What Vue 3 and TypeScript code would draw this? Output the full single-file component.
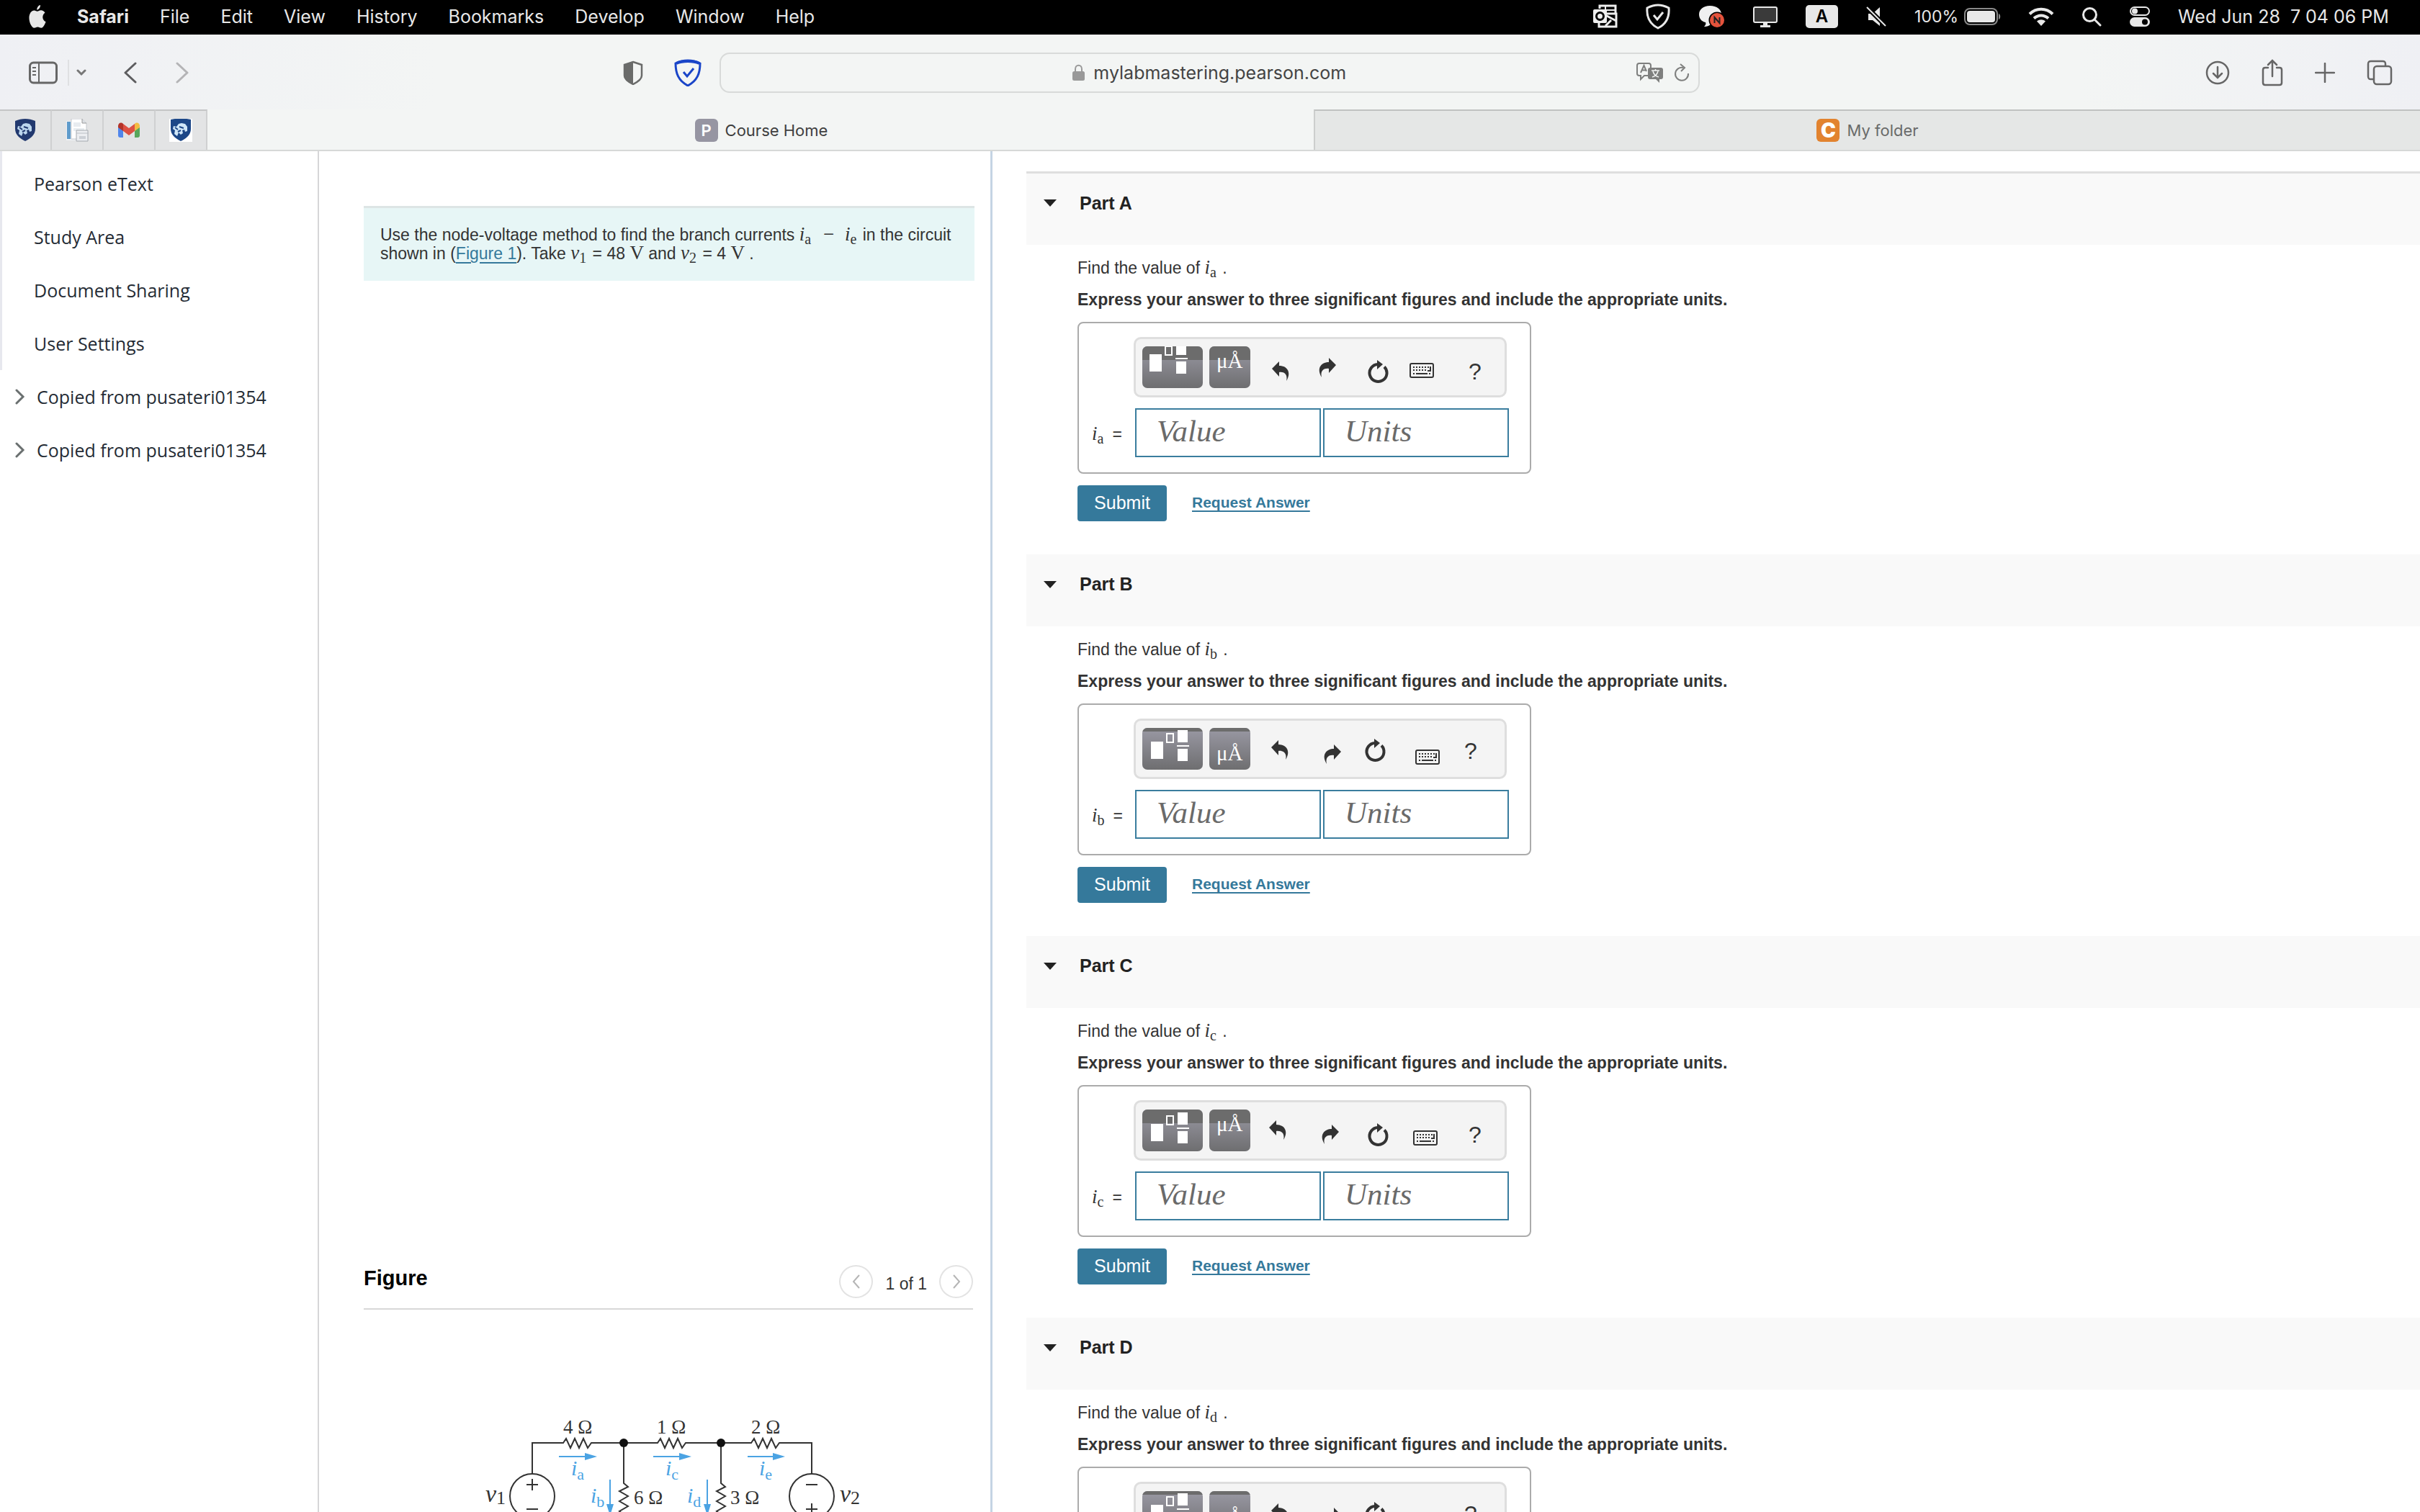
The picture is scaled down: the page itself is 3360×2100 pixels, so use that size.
<script setup lang="ts">
type Point = [number, number]

interface Part {
  id: string
  sub: string
  template: Point
  units: Point
  shade: number
  undo: Point
  redo: Point
  reset: Point
  keys: Point
  help: Point
}

const menus: string[] = ['File', 'Edit', 'View', 'History', 'Bookmarks', 'Develop', 'Window', 'Help']

const links: string[] = ['Pearson eText', 'Study Area', 'Document Sharing', 'User Settings']
const copies: string[] = ['Copied from pusateri01354', 'Copied from pusateri01354']

const parts: Part[] = [
  { id: 'A', sub: 'a', template: [-2, -8], units: [0, -15], shade: 19, undo: [21, 34], redo: [20, 29], reset: [22, 32], keys: [14, 36], help: [31, 35] },
  { id: 'B', sub: 'b', template: [0, 0], units: [0, 0], shade: 5, undo: [20, 30], redo: [27, 36], reset: [18, 28], keys: [22, 43], help: [25, 32] },
  { id: 'C', sub: 'c', template: [0, 1], units: [0, -15], shade: 19, undo: [17, 28], redo: [24, 34], reset: [22, 32], keys: [19, 42], help: [31, 35] },
  { id: 'D', sub: 'd', template: [0, 0], units: [0, 0], shade: 5, undo: [20, 30], redo: [27, 36], reset: [18, 28], keys: [22, 43], help: [25, 32] },
]

const at = (p: Point): string => `translate(${p[0]} ${p[1]})`
</script>

<template>
  <div class="screen">
    <header class="menubar">
      <nav class="menus">
        <svg class="apple" width="24" height="34" viewBox="0 0 27 34" preserveAspectRatio="none"><path fill="#e8e8e8" d="M18 1c.3 3-2.300 6.500-5.300 6.700C12.300 4.700 15 1.500 18 1zM13.300 9.700c1.600 0 3-1.500 5.700-1.500 2.500 0 5 1.300 6.300 3.500-5.300 3.200-4.500 10.300 1.200 12.600-1.200 3.300-4.200 8.500-7 8.500-2.200 0-3-1.300-5.600-1.300s-3.500 1.300-5.500 1.300C4.700 32.800.5 25.500.5 18.800c0-6.200 3.700-10.400 7.900-10.400 2.200 0 3.600 1.300 4.900 1.300z" /></svg>
        <b>Safari</b>
        <span v-for="m in menus" :key="m">{{ m }}</span>
      </nav>
      <div class="status">
        <svg width="34" height="34" viewBox="0 0 34 34"><path d="M9 6V2h22v11" fill="none" stroke="#eee" stroke-width="3" /><path d="M17 2v12M17 8h14" stroke="#eee" stroke-width="2" /><path d="M8 13h24v18H8z" fill="none" stroke="#eee" stroke-width="3" /><path d="M17 15l15 8M17 30l8-8" stroke="#eee" stroke-width="3" /><rect x="0" y="7" width="19" height="19" rx="2" fill="#eee" /><circle cx="9.500" cy="16.500" r="5" fill="none" stroke="#000" stroke-width="3" /></svg>
        <svg width="36" height="36" viewBox="0 0 36 36"><path d="M18 2c5 0 10 1.500 15 4 1 12-3 22-15 28C6 28 2 18 3 6c5-2.500 10-4 15-4z" fill="none" stroke="#e8e8e8" stroke-width="3" /><path d="M12 16l5 6 8-10" fill="none" stroke="#e8e8e8" stroke-width="3" /></svg>
        <svg width="37" height="34" viewBox="0 0 37 34"><path d="M16 2c10 0 16 5 16 12s-6 12-13 12c-3 4-7 5-11 5 2-2 3-4 2-6C4 24 1 19 1 14 1 7 7 2 16 2z" fill="#f0f0f0" /><circle cx="26" cy="22" r="11.500" fill="#000" /><circle cx="26" cy="22" r="10" fill="#e5533c" /><path d="M22.500 26v-8l7 8v-8" fill="none" stroke="#222" stroke-width="2" /></svg>
        <svg width="36" height="32" viewBox="0 0 36 32"><rect x="2" y="3" width="32" height="21" rx="2" fill="#3a3a3a" stroke="#e8e8e8" stroke-width="2" /><path d="M15 24h6v4h4v3H11v-3h4z" fill="#e8e8e8" /></svg>
        <span class="input-source">A</span>
        <svg width="30" height="30" viewBox="0 0 30 30"><path d="M4 11h6L20 2v26l-10-8H4z" fill="#e8e8e8" /><path d="M2 2l26 26" stroke="#000" stroke-width="6" /><path d="M2 2l26 26" stroke="#e8e8e8" stroke-width="2" /></svg>
        <span class="battery">100%
          <svg width="51" height="26" viewBox="0 0 51 26"><rect x="1" y="2" width="45" height="22" rx="7" fill="none" stroke="#8a8a8a" stroke-width="2" /><rect x="4" y="5" width="39" height="16" rx="4" fill="#e8e8e8" /><path d="M48 9c3 1 3 7 0 8z" fill="#8a8a8a" /></svg>
        </span>
        <svg width="36" height="27" viewBox="0 0 36 27"><g fill="none" stroke="#e8e8e8" stroke-width="4"><path d="M2 9.500c9-9 23-9 32 0" /><path d="M8 15.500c6-5.500 14-5.500 20 0" /></g><path d="M18 26l-6-6.500c4-3 8-3 12 0z" fill="#e8e8e8" /></svg>
        <svg width="28" height="28" viewBox="0 0 28 28"><circle cx="11.500" cy="11.500" r="9" fill="none" stroke="#e8e8e8" stroke-width="3" /><path d="M18 18l8 8" stroke="#e8e8e8" stroke-width="3" stroke-linecap="round" /></svg>
        <svg width="30" height="28" viewBox="0 0 30 28"><rect x="2" y="1" width="26" height="11" rx="5.500" fill="none" stroke="#e8e8e8" stroke-width="2" /><circle cx="8" cy="6.500" r="4" fill="#e8e8e8" /><rect x="1" y="15" width="28" height="13" rx="6.500" fill="#e8e8e8" /><circle cx="22" cy="21.500" r="4" fill="#000" /></svg>
        <span class="clock">Wed Jun 28&nbsp; 7 04 06 PM</span>
      </div>
    </header>

    <div class="toolbar">
      <div class="tool-left">
        <button class="icon" aria-label="Show sidebar"><svg width="40" height="32" viewBox="0 0 40 32"><rect x="1.500" y="2" width="37" height="28" rx="5" fill="none" stroke="#666" stroke-width="3" /><path d="M14 2v28M5 9h5M5 14h5M5 19h5" stroke="#666" stroke-width="2" /></svg></button>
        <i class="rule"></i>
        <button class="icon" aria-label="Tab groups"><svg width="14" height="10" viewBox="0 0 14 10"><path d="M2 2l5 5 5-5" fill="none" stroke="#777" stroke-width="3" stroke-linecap="round" /></svg></button>
        <button class="icon back" aria-label="Back"><svg width="18" height="30" viewBox="0 0 18 30"><path d="M16 2L2 15l14 13" fill="none" stroke="#5d5d5f" stroke-width="3" stroke-linecap="round" stroke-linejoin="round" /></svg></button>
        <button class="icon forward" aria-label="Forward"><svg width="18" height="30" viewBox="0 0 18 30"><path d="M2 2l14 13L2 28" fill="none" stroke="#b4b4b6" stroke-width="3" stroke-linecap="round" stroke-linejoin="round" /></svg></button>
      </div>
      <div class="shields">
        <button class="icon" aria-label="Privacy report"><svg width="28" height="34" viewBox="0 0 28 34"><path d="M14 2l12 4v15c0 5-6 9-12 12C8 30 2 26 2 21V6z" fill="none" stroke="#6a6b6a" stroke-width="2.500" /><path d="M14 1v32C7 30 1 26 1 21V6z" fill="#6a6b6a" /></svg></button>
        <button class="icon" aria-label="Ad blocker"><svg width="38" height="38" viewBox="0 0 38 38"><path d="M19 2c6 0 11 1 17 4 0 14-4 24-17 31C6 30 2 20 2 6c6-3 11-4 17-4z" fill="none" stroke="#1a45c8" stroke-width="3" /><path d="M3 6c9-4 23-4 32 0" fill="none" stroke="#1a45c8" stroke-width="4" /><path d="M13 18l5 6 9-11" fill="none" stroke="#1a45c8" stroke-width="3" /></svg></button>
      </div>
      <div class="address">
        <span class="url">
          <svg width="17" height="24" viewBox="0 0 17 24"><path d="M4 11V7c0-7 9-7 9 0v4" fill="none" stroke="#999" stroke-width="2" /><rect x="0" y="10" width="17" height="13" rx="2.500" fill="#999" /></svg>
          mylabmastering.pearson.com
        </span>
        <span class="url-tools">
          <svg width="38" height="28" viewBox="0 0 38 28"><path d="M16 18h-5l-5 5v-5H4c-2 0-3-1-3-3V4c0-2 1-3 3-3h13c2 0 3 1 3 3v3" fill="none" stroke="#7e7f7e" stroke-width="2" /><path d="M6 14L10.500 4 14 12M7.500 10.500h6" fill="none" stroke="#7e7f7e" stroke-width="2" /><path d="M19 7h15c2 0 3 1 3 3v10c0 2-1 3-3 3h-2v5l-5-5h-8c-2 0-3-1-3-3V10c0-2 1-3 3-3z" fill="#7e7f7e" /><path d="M21 11h11M26.500 9v2M30 12c-1 4-4 7-8 8M23 12c1 4 4 7 8 8" fill="none" stroke="#f3f5f4" stroke-width="1.500" /></svg>
          <svg width="22" height="26" viewBox="0 0 22 26"><path d="M13 6A9 9 0 1 0 20 14" fill="none" stroke="#7e7f7e" stroke-width="2" /><path d="M9 1l6 5-5 5" fill="none" stroke="#7e7f7e" stroke-width="2" /></svg>
        </span>
      </div>
      <div class="tool-right">
        <button class="icon" aria-label="Downloads"><svg width="34" height="34" viewBox="0 0 34 34"><circle cx="17" cy="17" r="15" fill="none" stroke="#666" stroke-width="2.500" /><path d="M17 9v15M11 18l6 6 6-6" fill="none" stroke="#666" stroke-width="2.500" stroke-linecap="round" /></svg></button>
        <button class="icon" aria-label="Share"><svg width="30" height="38" viewBox="0 0 30 38"><path d="M9 12H5c-2 0-3 1-3 3v18c0 2 1 3 3 3h20c2 0 3-1 3-3V15c0-2-1-3-3-3h-4M15 24V3M9 8l6-6 6 6" fill="none" stroke="#666" stroke-width="2.500" stroke-linecap="round" /></svg></button>
        <button class="icon" aria-label="New tab"><svg width="28" height="28" viewBox="0 0 28 28"><path d="M14 1v26M1 14h26" stroke="#666" stroke-width="2.500" stroke-linecap="round" /></svg></button>
        <button class="icon" aria-label="Tab overview"><svg width="36" height="36" viewBox="0 0 36 36"><path d="M9 27H6c-3 0-4-1-4-4V6c0-3 1-4 4-4h16c3 0 4 1 4 4v3" fill="none" stroke="#666" stroke-width="2.500" /><rect x="10" y="9" width="24" height="25" rx="4" fill="none" stroke="#666" stroke-width="2.500" /></svg></button>
      </div>
    </div>

    <div class="tabs">
      <div class="pin"><svg width="32" height="32" viewBox="0 0 32 32"><path d="M2 3c9-4 19-4 28 0v11c0 8-6 13-14 17C8 27 2 22 2 14z" fill="#22396f" /><path d="M6 10l4 1 3-4 4-1 5 1 3 4v6l-3 1-1-3-3 1 1 4-3 2-3-3-2 5-4-3 1-5-3-2z" fill="#bcd6ee" /><path d="M8 12l4 3M14 11l6 2M12 18l4-2" stroke="#22396f" stroke-width="2" /></svg></div>
      <div class="pin"><svg width="32" height="32" viewBox="0 0 32 32"><path d="M1 3h22v27H1z" fill="#eef1f4" /><path d="M2 4h5v24H2z" fill="#5f9bcb" /><path d="M8 0h15l6 6v22H8z" fill="#fff" stroke="#c3c8cd" /><path d="M11 5h10v6H11zM11 13h15v4H11z" fill="#e8ecf0" /><path d="M23 0v6h6" fill="#dde1e5" stroke="#999" /><path d="M15 16h16v15H15z" fill="#eceef1" stroke="#a3a8ae" /><path d="M15 20h17" stroke="#b9bdc3" /><path d="M19 24h9v4h-9z" fill="#ccd0d6" /></svg></div>
      <div class="pin"><svg width="30" height="24" viewBox="0 0 30 24"><path d="M0 5l7 5v12H3c-2 0-3-1-3-3z" fill="#5186ec" /><path d="M23 10l7-5v14c0 2-1 3-3 3h-4z" fill="#58a65c" /><path d="M23 3c3-3 7-1 7 3v2l-7 5z" fill="#f3bc42" /><path d="M0 8V6c0-4 4-6 7-3v10z" fill="#b3342a" /><path d="M7 3l8 6 8-6v10l-8 6-8-6z" fill="#dd5144" /></svg></div>
      <div class="pin"><svg width="32" height="32" viewBox="0 0 32 32"><path d="M0 0h32v32H0z" fill="#fff" /><path d="M2 1c9-2 19-2 28 0v13c0 8-6 13-14 17C8 27 2 22 2 14z" fill="#1c4788" /><path d="M6 10l4 1 3-4 4-1 5 1 3 4v6l-3 1-1-3-3 1 1 4-3 2-3-3-2 5-4-3 1-5-3-2z" fill="#cfe6f8" /><path d="M8 12l4 3M14 11l6 2M12 18l4-2" stroke="#1c4788" stroke-width="2" /></svg></div>
      <div class="tab current"><span class="fav p">P</span>Course Home</div>
      <div class="tab"><span class="fav c">C</span>My folder</div>
    </div>

    <main class="content">
      <aside class="sidebar">
        <ul class="links">
          <li v-for="l in links" :key="l"><a href="#">{{ l }}</a></li>
        </ul>
        <ul class="copies">
          <li v-for="(c, i) in copies" :key="i">
            <svg width="14" height="22" viewBox="0 0 14 22"><path d="M2 2l9 9-9 9" fill="none" stroke="#6a7070" stroke-width="3" stroke-linecap="round" /></svg>
            <a href="#">{{ c }}</a>
          </li>
        </ul>
      </aside>

      <section class="problem-pane">
        <div class="problem">
          <p>Use the node-voltage method to find the branch currents <i>i</i><sub>a</sub>&nbsp; <span class="rm minus">−</span>&nbsp; <i>i</i><sub>e</sub> in the circuit<br>shown in (<a href="#figure">Figure 1</a>). Take <i>v</i><sub>1</sub> = 48 <span class="rm">V</span> and <i>v</i><sub>2</sub> = 4 <span class="rm">V</span> .</p>
        </div>
        <div id="figure" class="figure">
          <div class="figure-head">
            <h2>Figure</h2>
            <div class="pager">
              <button aria-label="Previous figure"><svg width="12" height="20" viewBox="0 0 12 20"><path d="M10 1L2 10l8 9" fill="none" stroke="#b5b5b5" stroke-width="2" /></svg></button>
              <span>1 of 1</span>
              <button aria-label="Next figure"><svg width="12" height="20" viewBox="0 0 12 20"><path d="M2 1l8 9-8 9" fill="none" stroke="#b5b5b5" stroke-width="2" /></svg></button>
            </div>
          </div>
          <svg class="circuit" width="536" height="300" viewBox="660 1960 536 300">
            <g fill="none" stroke="#333" stroke-width="2">
              <path d="M739 2047v-43h43l4-6 6 13 6-13 6 13 6-13 6 13 5-7h92l4-6 6 13 6-13 6 13 6-13 6 13 5-7h91l4-6 6 13 6-13 6 13 6-13 6 13 5-7h45v43" />
              <path d="M866 2004v56l6 5-12 6 12 7-12 7 12 7-12 7 6 5v70M1001 2004v56l6 5-12 6 12 7-12 7 12 7-12 7 6 5v70" />
              <path d="M739 2109v65h388v-65" />
              <circle cx="739" cy="2078" r="31" />
              <circle cx="1127" cy="2078" r="31" />
              <path d="M731 2062h16M739 2054v16M731 2096h16M1119 2062h16M1119 2096h16M1127 2088v16" />
            </g>
            <circle cx="866" cy="2004" r="6" fill="#111" />
            <circle cx="1001" cy="2004" r="6" fill="#111" />
            <g stroke="#4ba3e3" stroke-width="2"><path d="M776 2023h40M907 2023h40M1038 2023h40M847 2055v38M982 2055v38" /></g>
            <path d="M812 2018l17 5-17 5zM943 2018l17 5-17 5zM1073 2018l17 5-17 5zM842 2089l5 16 5-16zM977 2089l5 16 5-16z" fill="#4ba3e3" />
            <g class="ohms">
              <text x="782" y="1991">4 Ω</text>
              <text x="912" y="1991">1 Ω</text>
              <text x="1043" y="1991">2 Ω</text>
              <text x="880" y="2089">6 Ω</text>
              <text x="1014" y="2089">3 Ω</text>
            </g>
            <g class="volts">
              <text x="674" y="2086"><tspan class="it">v</tspan><tspan class="small" dy="3">1</tspan></text>
              <text x="1166" y="2086"><tspan class="it">v</tspan><tspan class="small" dy="3">2</tspan></text>
            </g>
            <g class="amps">
              <text x="793" y="2049"><tspan class="it">i</tspan><tspan class="small" dy="6">a</tspan></text>
              <text x="924" y="2049"><tspan class="it">i</tspan><tspan class="small" dy="6">c</tspan></text>
              <text x="1054" y="2049"><tspan class="it">i</tspan><tspan class="small" dy="6">e</tspan></text>
              <text x="820" y="2087"><tspan class="it">i</tspan><tspan class="small" dy="6">b</tspan></text>
              <text x="954" y="2087"><tspan class="it">i</tspan><tspan class="small" dy="6">d</tspan></text>
            </g>
          </svg>
        </div>
      </section>

      <section class="parts">
        <article v-for="p in parts" :key="p.id" class="part">
          <h3><svg width="18" height="10" viewBox="0 0 18 10"><path d="M0 0h18l-9 10z" fill="#222" /></svg>Part {{ p.id }}</h3>
          <div class="body">
            <p>Find the value of <i>i</i><sub>{{ p.sub }}</sub> .</p>
            <p class="strong">Express your answer to three significant figures and include the appropriate units.</p>
            <form class="answer" @submit.prevent>
              <div class="tools">
                <button type="button" class="dark template" aria-label="Templates">
                  <svg width="84" height="58" viewBox="0 0 84 58">
                    <rect width="84" :height="p.shade" fill="#6c6c6c" />
                    <g :transform="at(p.template)" fill="#fff">
                      <rect x="12" y="19" width="17" height="24" />
                      <rect x="34" y="8" width="9" height="12" fill="none" stroke="#fff" stroke-width="2" />
                      <rect x="49" y="3" width="14" height="17" />
                      <rect x="48" y="24" width="17" height="2" />
                      <rect x="49" y="29" width="14" height="17" />
                    </g>
                  </svg>
                </button>
                <button type="button" class="dark units" aria-label="Symbols">
                  <svg width="57" height="58" viewBox="0 0 57 58">
                    <rect width="57" :height="p.shade" fill="#6c6c6c" />
                    <g :transform="at(p.units)"><text x="10" y="45" class="mu">μÅ</text></g>
                  </svg>
                </button>
                <button type="button" class="tool" aria-label="Undo"><svg width="66" height="78" viewBox="0 3 66 78"><path :transform="at(p.undo)" d="M0 10L10 0v6c10 0 18 8 10 21 2-8-2-13-10-12v6z" fill="#333" /></svg></button>
                <button type="button" class="tool" aria-label="Redo"><svg width="66" height="78" viewBox="0 3 66 78"><path :transform="at(p.redo)" d="M24 10L14 0v6C4 6-4 14 4 27c-2-8 2-13 10-12v6z" fill="#333" /></svg></button>
                <button type="button" class="tool" aria-label="Reset"><svg width="66" height="78" viewBox="0 3 66 78"><g :transform="at(p.reset)"><path d="M14 6A12 12 0 1 0 23 9.500" fill="none" stroke="#333" stroke-width="4" /><path d="M13 0l8 6-8 7z" fill="#333" /></g></svg></button>
                <button type="button" class="tool" aria-label="Keyboard shortcuts"><svg width="66" height="78" viewBox="0 3 66 78"><g :transform="at(p.keys)"><rect x="1" y="1" width="32" height="19" rx="2" fill="none" stroke="#333" stroke-width="2" /><path d="M5 6h22M5 10h18M5 15h2M27 15h3" fill="none" stroke="#333" stroke-width="2" stroke-dasharray="2 2" /><path d="M29 5v6h-4M9 15h16" fill="none" stroke="#333" stroke-width="2" /></g></svg></button>
                <button type="button" class="tool" aria-label="Help"><svg width="66" height="78" viewBox="0 3 66 78"><g :transform="at(p.help)"><text x="-1" y="24" class="q">?</text></g></svg></button>
              </div>
              <div class="row">
                <label :for="'value-' + p.id"><i>i</i><sub>{{ p.sub }}</sub><span class="eq">=</span></label>
                <input :id="'value-' + p.id" type="text" placeholder="Value">
                <input type="text" placeholder="Units" :aria-label="'Units for part ' + p.id">
              </div>
            </form>
            <div class="actions">
              <button class="submit">Submit</button>
              <a href="#">Request Answer</a>
            </div>
          </div>
        </article>
      </section>
    </main>
  </div>
</template>

<style>
body {
  margin: 0;
}
</style>

<style scoped>
* {
  box-sizing: border-box;
}
.screen {
  height: 100vh;
  overflow: hidden;
  display: flex;
  flex-direction: column;
  background: #fff;
  color: #333;
  font-family: "Liberation Sans", Arial, sans-serif;
  font-size: 23px;
}
svg {
  display: block;
  flex: none;
}
button {
  font: inherit;
  padding: 0;
  border: 0;
  background: none;
}
p,
h2,
h3,
ul {
  margin: 0;
  padding: 0;
}
.menubar,
.toolbar,
.tabs {
  flex: none;
  display: flex;
  align-items: center;
  font-family: Inter, "Open Sans", sans-serif;
}
.menubar {
  height: 48px;
  padding: 0 36px 2px 40px;
  justify-content: space-between;
  background: #000;
  color: #e8e8e8;
  font-size: 25px;
  white-space: nowrap;
}
.menus {
  display: flex;
  align-items: center;
  gap: 43px;
}
.status {
  display: flex;
  align-items: center;
  gap: 38px;
}
.clock {
  min-width: 300px;
}
.input-source {
  width: 45px;
  height: 32px;
  border-radius: 5px;
  background: #e8e8e8;
  color: #000;
  font-size: 24px;
  font-weight: 600;
  line-height: 32px;
  text-align: center;
}
.battery {
  display: flex;
  align-items: center;
  gap: 8px;
  font-size: 23px;
}
.toolbar {
  height: 104px;
  padding: 2px 38px 0 40px;
  background: linear-gradient(90deg, #eff0f4, #f3f5f4 18%, #f3f5f4 86%, #eff0f4);
}
.tool-left {
  display: flex;
  align-items: center;
  flex: 6 1 0;
}
.rule {
  width: 2px;
  height: 36px;
  margin: 0 10px 0 14px;
  background: #dfe0e2;
}
.back {
  margin-left: 52px;
}
.forward {
  margin-left: 54px;
}
.shields {
  display: flex;
  align-items: center;
  gap: 43px;
  margin-right: 25px;
}
.address {
  display: flex;
  align-items: center;
  width: 1361px;
  height: 56px;
  border: 2px solid #d8dad9;
  border-radius: 14px;
  padding-right: 12px;
}
.url {
  flex: 1;
  display: flex;
  align-items: center;
  justify-content: center;
  gap: 12px;
  padding-left: 86px;
  color: #444;
  font-size: 25px;
}
.url-tools {
  display: flex;
  align-items: center;
  gap: 14px;
}
.tool-right {
  flex: 7 1 0;
  display: flex;
  align-items: center;
  justify-content: flex-end;
  gap: 44px;
}
.tabs {
  height: 58px;
  align-items: stretch;
  border-bottom: 2px solid #d6d8d7;
  background: #f3f5f4;
  font-size: 22px;
}
.pin {
  width: 72px;
  display: flex;
  align-items: center;
  justify-content: center;
  border-top: 2px solid #c4c5c6;
  border-right: 2px solid #cfd0d1;
  background: #e3e4e5;
}
.tab {
  flex: 1 1 0;
  display: flex;
  align-items: center;
  justify-content: center;
  gap: 10px;
  border-top: 2px solid #c0c2c1;
  border-left: 2px solid #cccecd;
  background: #e5e7e6;
  color: #6a6b6a;
}
.tab.current {
  border-color: transparent;
  background: none;
  color: #3f403f;
}
.fav {
  width: 32px;
  height: 32px;
  border-radius: 6px;
  color: #fff;
  font-size: 22px;
  font-weight: 600;
  line-height: 32px;
  text-align: center;
}
.fav.p {
  background: #9695a2;
}
.fav.c {
  background: #e2832f;
  font-size: 28px;
  font-weight: 900;
}
.content {
  flex: 1;
  min-height: 0;
  display: flex;
}
.sidebar {
  flex: none;
  width: 443px;
  border-right: 2px solid #d6d6d8;
  font-family: "Open Sans", "Noto Sans", sans-serif;
  font-size: 25px;
}
.sidebar li {
  height: 74px;
  display: flex;
  align-items: center;
  list-style: none;
}
.sidebar a {
  color: #252c35;
  text-decoration: none;
}
.links {
  padding: 8px 0 0 44px;
  border-left: 3px solid #e7e8ee;
}
.copies {
  padding-left: 21px;
}
.copies li {
  gap: 16px;
}
.problem-pane {
  flex: none;
  width: 28%;
  max-width: 935px;
  padding: 76px 0 0 62px;
  display: flex;
  flex-direction: column;
  justify-content: space-between;
  border-right: 3px solid #c5d4e4;
}
.problem {
  margin-right: 22px;
  padding: 24px 0 25px 23px;
  border-top: 3px solid #dde5e5;
  background: #e7f6f6;
  line-height: 26px;
  white-space: nowrap;
}
.problem a,
.actions a {
  color: #35799b;
  text-underline-offset: 4px;
}
p i,
label i {
  font-family: "Liberation Serif", "Times New Roman", serif;
  font-size: 27px;
  line-height: 1px;
}
sub {
  margin-right: 2px;
  font-family: "Liberation Serif", "Times New Roman", serif;
  font-size: 20px;
  line-height: 1px;
  vertical-align: -5px;
}
.rm {
  font-family: "Liberation Serif", "Times New Roman", serif;
  font-size: 27px;
  line-height: 1px;
}
.minus {
  margin: 0 2px;
}
.figure {
  height: 352px;
  flex: none;
}
.figure-head {
  display: flex;
  justify-content: space-between;
  height: 71px;
  margin-right: 24px;
  border-bottom: 2px solid #d8d8d8;
}
h2 {
  padding-top: 10px;
  color: #000;
  font-size: 29px;
  line-height: 34px;
}
.pager {
  display: flex;
  gap: 17px;
  padding-top: 9px;
}
.pager button {
  display: flex;
  align-items: center;
  justify-content: center;
  width: 47px;
  height: 46px;
  border: 2px solid #e3e3e3;
  border-radius: 50%;
}
.pager span {
  line-height: 52px;
}
.circuit {
  margin: 141px auto 0 155px;
}
.circuit text {
  font-family: "Liberation Serif", "Times New Roman", serif;
}
.circuit .it {
  font-style: italic;
}
.ohms text {
  font-size: 27px;
  fill: #333;
}
.volts text {
  font-size: 34px;
  fill: #333;
}
.volts .small {
  font-size: 26px;
}
.amps text {
  font-size: 30px;
  fill: #4ba3e3;
}
.amps .small {
  font-size: 22px;
}
.parts {
  flex: 1;
  min-width: 0;
  padding: 28px 0 0 47px;
}
h3 {
  display: flex;
  align-items: center;
  gap: 32px;
  height: 100px;
  padding: 0 0 17px 24px;
  background: #f9f9f9;
  color: #222;
  font-size: 25px;
}
.part:first-child h3 {
  height: 102px;
  border-top: 3px solid #dfdfdf;
}
.body {
  padding: 18px 0 46px 71px;
}
.body p {
  line-height: 28px;
}
.body .strong {
  margin-top: 16px;
  font-weight: bold;
}
.answer {
  width: 630px;
  height: 211px;
  margin-top: 17px;
  padding: 19px 0 0 18px;
  border: 2px solid #ababab;
  border-radius: 8px;
}
.tools {
  display: flex;
  align-items: center;
  width: 518px;
  height: 84px;
  margin-left: 58px;
  padding-left: 9px;
  border: 3px solid #dedede;
  border-radius: 10px;
  background: #f4f4f4;
}
.dark {
  overflow: hidden;
  margin-right: 9px;
  border-radius: 7px;
  background: linear-gradient(#9a99a4, #6e6e70);
}
.mu {
  font-family: "Liberation Serif", serif;
  font-size: 29px;
  fill: #fff;
}
.q {
  font-family: "Liberation Sans", sans-serif;
  font-size: 32px;
  fill: #333;
}
.row {
  display: flex;
  gap: 3px;
  margin-top: 15px;
}
label {
  width: 57px;
  line-height: 72px;
}
.eq {
  margin-left: 10px;
}
input {
  width: 258px;
  height: 68px;
  padding: 0 0 5px 28px;
  border: 2px solid #3a7d9e;
  border-radius: 0;
  background: #fff;
  font: italic 43px "Liberation Serif", "Times New Roman", serif;
}
input::placeholder {
  color: #6a6a6a;
  opacity: 1;
}
.actions {
  display: flex;
  align-items: center;
  gap: 35px;
  margin-top: 16px;
}
.submit {
  width: 124px;
  height: 50px;
  padding-bottom: 2px;
  border-radius: 4px;
  background: #35799b;
  color: #fff;
  font-size: 25px;
}
.actions a {
  padding-bottom: 2px;
  font-size: 21px;
  font-weight: bold;
}
</style>
